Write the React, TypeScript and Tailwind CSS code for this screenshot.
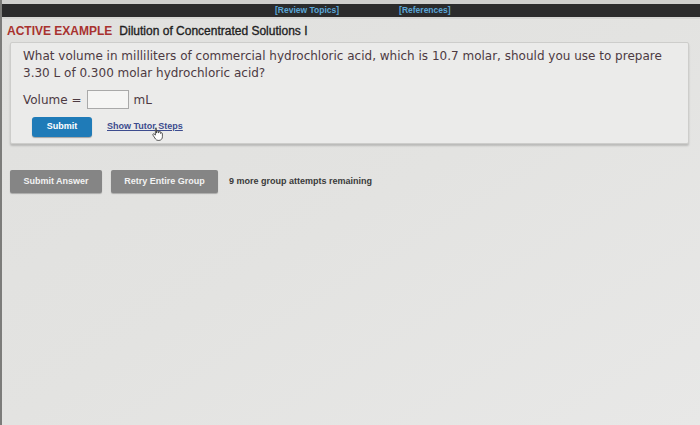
import React from 'react';

const sans = "font-['Liberation_Sans',Arial,sans-serif]";
const verdana = "font-['DejaVu_Sans',Verdana,sans-serif]";

function HandCursor() {
  return (
    <svg width="12" height="14" viewBox="0 0 12 14" className="absolute left-[45px] top-[7px]">
      <path
        d="M3.5 1.2c.6 0 1 .4 1 1V6h.3V4.8c0-.5.4-.9.9-.9s.9.4.9.9V6h.2v-.8c0-.5.4-.9.9-.9s.9.4.9.9V6.5h.1c0-.5.4-.8.8-.8s.9.4.9.9v3.2c0 2-1.4 3.6-3.4 3.6H6.1c-1.1 0-2-.5-2.6-1.4L1 8.2c-.3-.4-.2-1 .2-1.3.4-.3 1-.2 1.3.2l.9 1.1V2.2c0-.6.4-1 1-1z"
        fill="#fff"
        stroke="#333"
        strokeWidth="0.8"
      />
    </svg>
  );
}

export default function App() {
  return (
    <div className="relative h-[425px] w-[700px] overflow-hidden bg-gradient-to-br from-[#e0e0de] via-[#e3e3e1] to-[#e8e8e7]">
      <div className="flex h-full border-l-2 border-[#7c7c7a]">
        <div className="flex flex-1 flex-col">
          {/* top strip + dark nav */}
          <div className="h-[4px] bg-[#cfcfcd]" />
          <div className={`flex h-[13px] items-center bg-[#2b2b2c] ${sans}`}>
            <span className="ml-[273px] text-[8.5px] font-bold leading-none text-[#5aa6d8]">[Review Topics]</span>
            <span className="ml-[60px] text-[8.5px] font-bold leading-none text-[#5aa6d8]">[References]</span>
          </div>
          <div className="h-[2px] bg-[#d6d6d4]" />

          <div className={`flex items-baseline gap-[7px] pl-[5px] pt-[3px] leading-[18px] ${sans}`}>
            <span className="text-[12px] font-bold text-[#a8322f]">ACTIVE EXAMPLE</span>
            <span className="text-[12px] text-[#1f1f1f] [-webkit-text-stroke:0.35px_#1f1f1f]">Dilution of Concentrated Solutions I</span>
          </div>

          {/* question panel */}
          <div className="ml-[8px] mr-[11px] mt-[2px] h-[102px] rounded-[2px] border border-[#cdcdcb] bg-[#ebebea] shadow-[0_2px_2px_rgba(0,0,0,0.18)]">
            <p className={`pl-[12px] pr-[10px] pt-[5px] text-[12px] leading-[17px] text-[#4d3a42] ${verdana}`}>
              What volume in milliliters of commercial hydrochloric acid, which is 10.7 molar, should you use to prepare 3.30 L of 0.300 molar hydrochloric acid?
            </p>
            <div className={`mt-[8px] flex items-center pl-[12px] text-[12px] text-[#4d3a42] ${verdana}`}>
              <span>Volume =</span>
              <span className="ml-[5px] h-[19px] w-[42px] border border-[#a9a9a9] bg-[#f5f5f4]" />
              <span className="ml-[5px]">mL</span>
            </div>
            <div className={`mt-[8px] flex items-center pl-[21px] ${sans}`}>
              <span className="flex h-[20px] w-[60px] items-center justify-center rounded-[3px] bg-[#1f7bb8] text-[9px] font-bold text-white shadow-[0_1px_1px_rgba(0,0,0,0.3)]">
                Submit
              </span>
              <span className="relative ml-[15px] text-[9px] font-bold text-[#3d4c8e] underline">
                Show Tutor Steps
                <HandCursor />
              </span>
            </div>
          </div>

          {/* bottom buttons */}
          <div className={`ml-[8px] mt-[26px] flex items-center ${sans}`}>
            <span className="flex h-[23px] w-[92px] items-center justify-center rounded-[2px] bg-[#858585] text-[9px] font-bold text-[#f2f2f2] shadow-[0_1px_1px_rgba(0,0,0,0.25)]">
              Submit Answer
            </span>
            <span className="ml-[9px] flex h-[23px] w-[107px] items-center justify-center rounded-[2px] bg-[#858585] text-[9px] font-bold text-[#f2f2f2] shadow-[0_1px_1px_rgba(0,0,0,0.25)]">
              Retry Entire Group
            </span>
            <span className="ml-[11px] text-[9px] font-bold text-[#3a3a3a]">9 more group attempts remaining</span>
          </div>
        </div>
      </div>
    </div>
  );
}
